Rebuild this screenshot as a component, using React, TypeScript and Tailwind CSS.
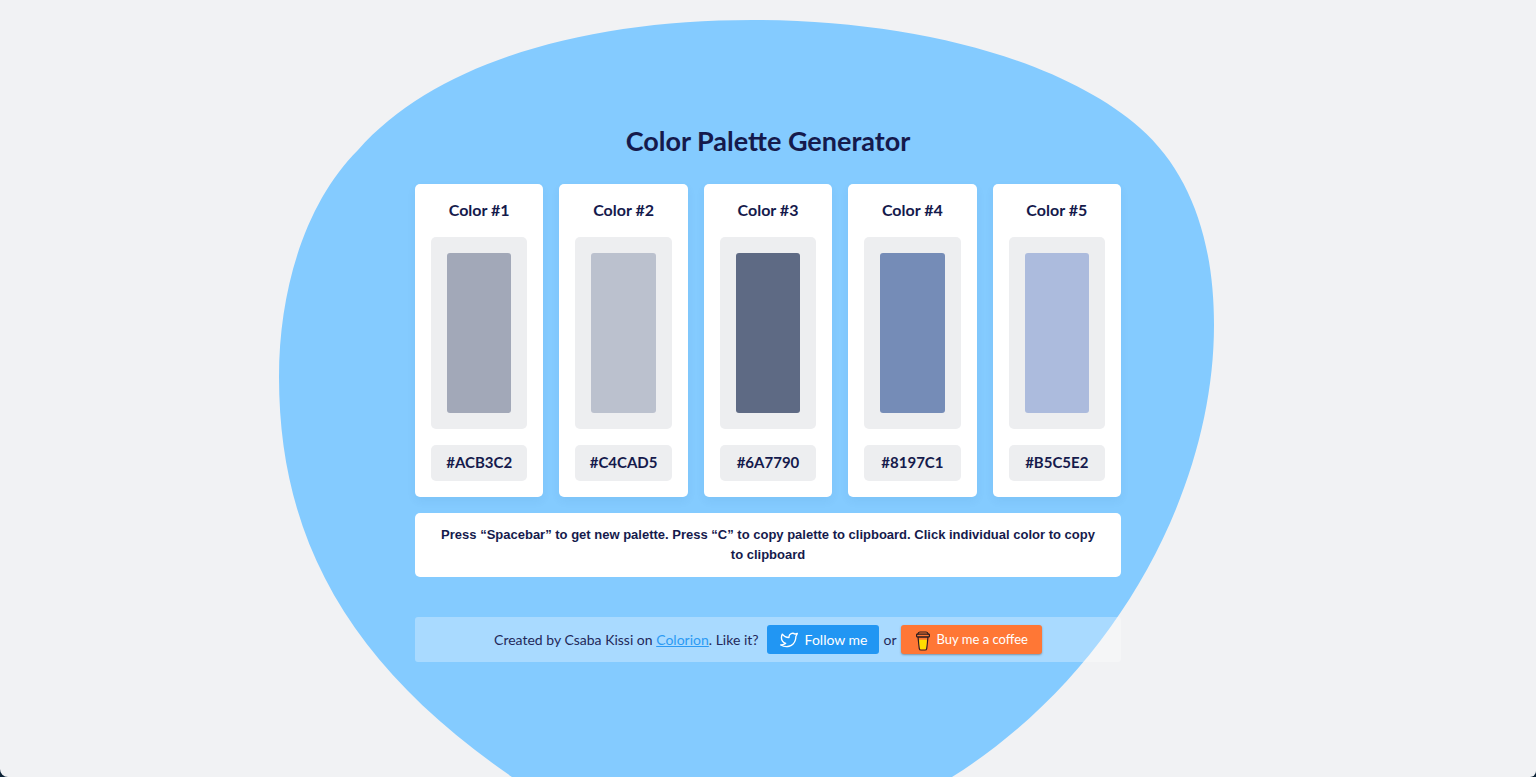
import { useEffect, useState } from 'react';

type Swatch = { hex: string; fill: string };

const initial: Swatch[] = [
  { hex: '#ACB3C2', fill: '#a2a8b8' },
  { hex: '#C4CAD5', fill: '#bbc1ce' },
  { hex: '#6A7790', fill: '#5e6a84' },
  { hex: '#8197C1', fill: '#758cb7' },
  { hex: '#B5C5E2', fill: '#acbbdd' },
];

const randomHex = () =>
  '#' + Math.floor(Math.random() * 0xffffff).toString(16).padStart(6, '0').toUpperCase();

const copy = async (text: string) => {
  try { await navigator.clipboard.writeText(text); } catch {}
};

function Blob() {
  return (
    <svg
      className="absolute inset-0 h-full w-full"
      viewBox="0 0 1536 777"
      preserveAspectRatio="xMidYMin slice"
      aria-hidden="true"
    >
      <path
        fill="#84cbff"
        d="M752 20C915 20 1062 60 1140 128C1190 172 1214 240 1214 325C1214 490 1115 675 952 777C830 860 640 860 512 777C350 665 279 540 279 377C279 290 305 203 358 150C436 62 585 20 752 20Z"
      />
    </svg>
  );
}

function TwitterIcon() {
  return (
    <svg className="h-5 w-5" viewBox="0 0 24 24" fill="none" stroke="currentColor" strokeWidth="1.6" strokeLinecap="round" strokeLinejoin="round" aria-hidden="true">
      <path d="M22 4.01c-1 .49-1.98.689-3 .99c-1.121-1.265-2.783-1.335-4.38-.737s-2.643 2.06-2.62 3.737v1c-3.245.083-6.135-1.395-8-4c0 0-4.182 7.433 4 11c-1.872 1.247-3.739 2.088-6 2c3.308 1.803 6.913 2.423 10.034 1.517c3.58-1.04 6.522-3.723 7.651-7.742a13.84 13.84 0 0 0 .497-3.753c0-.249 1.51-2.772 1.818-4.013z" />
    </svg>
  );
}

function CoffeeIcon() {
  return (
    <svg className="mt-0.5 h-5 w-4" viewBox="0 0 16 20" fill="none" stroke="#2b1d1f" strokeWidth="1.2" strokeLinecap="round" strokeLinejoin="round" aria-hidden="true">
      <path fill="#ff7735" d="M3 6L4.3 17.6Q4.5 19 6 19H10Q11.5 19 11.7 17.6L13 6Z" />
      <path stroke="none" fill="#ffdd00" d="M4.1 8.8L5 17.4Q5.1 18.3 6 18.3H10Q10.9 18.3 11 17.4L11.9 8.8Z" />
      <path fill="#ff7735" d="M1.6 3.7Q1.6 3.2 2.2 3.2H13.8Q14.4 3.2 14.4 3.7V5.2Q14.4 5.8 13.8 5.8H2.2Q1.6 5.8 1.6 5.2Z" />
      <path d="M2.8 3.1Q3.2 1 4.8 1H11.2Q12.8 1 13.2 3.1" />
    </svg>
  );
}

export default function App() {
  const [palette, setPalette] = useState(initial);

  useEffect(() => {
    const onKey = (e: KeyboardEvent) => {
      if (e.code === 'Space') {
        e.preventDefault();
        setPalette(initial.map(() => { const hex = randomHex(); return { hex, fill: hex }; }));
      }
      if (e.key === 'c' && !e.metaKey && !e.ctrlKey) copy(palette.map((s) => s.hex).join(', '));
    };
    window.addEventListener('keydown', onKey);
    return () => window.removeEventListener('keydown', onKey);
  }, [palette]);

  return (
    <div className="bg-[#0c2236]">
      <div className="relative min-h-screen overflow-hidden rounded-br-md rounded-bl-lg bg-[#f1f2f4] px-4 pt-31 pb-28 font-['Lato',sans-serif] text-[#151a4c]">
        <Blob />
        <main className="relative mx-auto max-w-[706px]">
          <h1 className="mb-[26px] text-center text-[27px] leading-[34px] font-bold">Color Palette Generator</h1>

          <div className="grid grid-cols-2 gap-4 sm:grid-cols-5">
            {palette.map((s, i) => (
              <div key={i} className="rounded-[5px] bg-white p-4 text-center shadow-[0_4px_10px_rgba(20,60,120,0.06)]">
                <h2 className="mb-[18px] text-base leading-[19px] font-bold">Color #{i + 1}</h2>
                <div className="mb-4 rounded-[5px] bg-[#edeef0] p-4">
                  <button
                    onClick={() => copy(s.hex)}
                    aria-label={`Copy ${s.hex}`}
                    className="block h-40 w-full cursor-pointer rounded-[3px]"
                    style={{ backgroundColor: s.fill }}
                  />
                </div>
                <p className="rounded-[5px] bg-[#edeef0] pb-0.5 text-[15px] leading-[34px] font-bold">{s.hex}</p>
              </div>
            ))}
          </div>

          <p className="mt-4 rounded-[5px] bg-white px-5 py-3 text-center font-['Liberation_Sans',sans-serif] text-[13px] leading-5 font-bold">
            Press “Spacebar” to get new palette. Press “C” to copy palette to clipboard. Click individual color to copy to clipboard
          </p>

          <footer className="mt-10 flex flex-wrap items-center justify-center rounded-[3px] bg-white/30 p-2 text-[14px] leading-[29px] text-[#23295a]">
            <span>
              Created by Csaba Kissi on <a href="#colorion" className="text-[#2c9af4] underline">Colorion</a>. Like it?
            </span>
            <a href="#follow" className="ml-2 flex items-center gap-1.5 rounded-[3px] bg-[#2196f3] px-3 text-white">
              <TwitterIcon />
              Follow me
            </a>
            <span className="mx-1">or</span>
            <a href="#coffee" className="flex items-center gap-1.5 rounded-[3px] bg-[#ff7735] px-3.5 text-[13px] text-white shadow-[0_1px_2px_rgba(80,80,80,0.5)]">
              <CoffeeIcon />
              Buy me a coffee
            </a>
          </footer>
        </main>
      </div>
    </div>
  );
}
